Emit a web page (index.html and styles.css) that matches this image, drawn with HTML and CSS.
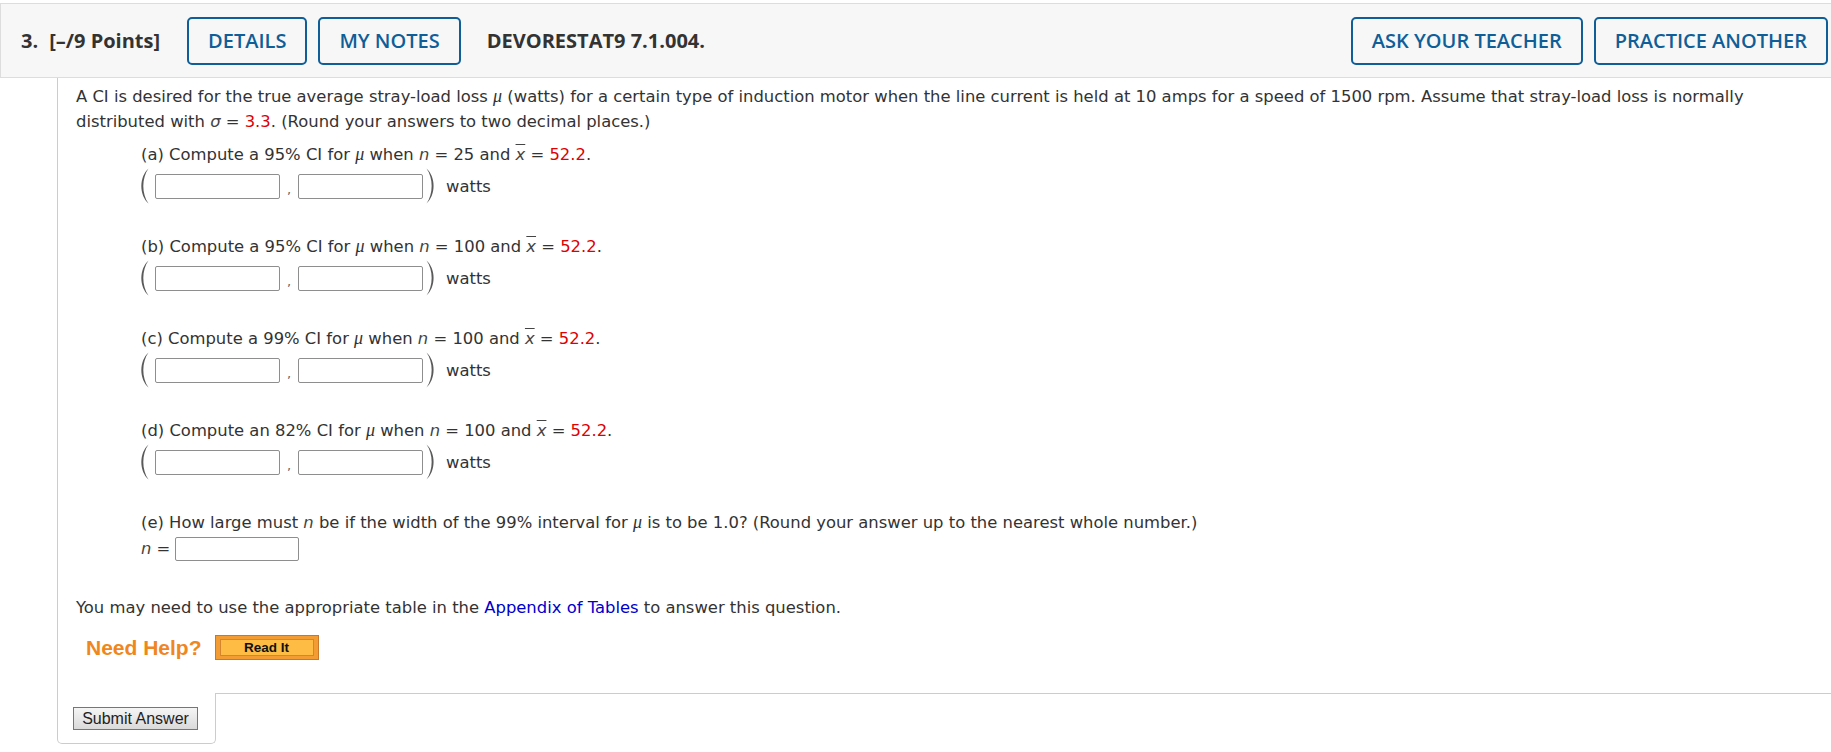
FILE: index.html
```html
<!DOCTYPE html>
<html lang="en">
<head>
<meta charset="utf-8">
<title>DEVORESTAT9 7.1.004</title>
<link rel="stylesheet" href="styles.css">
</head>
<body>
<div class="page">
  <header class="qhead">
    <span class="qnum">3.</span>
    <span class="qpts">[–/9 Points]</span>
    <button class="hbtn first">DETAILS</button>
    <button class="hbtn">MY NOTES</button>
    <span class="qid">DEVORESTAT9 7.1.004.</span>
    <span class="spacer"></span>
    <button class="hbtn">ASK YOUR TEACHER</button>
    <button class="hbtn">PRACTICE ANOTHER</button>
  </header>

  <div class="qbody">
    <div class="content">
      <p class="intro">A CI is desired for the true average stray-load loss <i class="mu">μ</i> (watts) for a certain type of induction motor when the line current is held at 10 amps for a speed of 1500 rpm. Assume that stray-load loss is normally distributed with <i class="var">σ</i> = <span class="red">3.3</span>. (Round your answers to two decimal places.)</p>

      <div class="part">
        <p class="qline">(a) Compute a 95% CI for <i class="mu">μ</i> when <i class="var">n</i> = 25 and <i class="var xbar">x</i> = <span class="red">52.2</span>.</p>
        <div class="ansrow">
          <svg class="paren" viewBox="0 0 12 36" width="12" height="36"><path d="M10.5 0.5 C1 9 1 27 10.5 35.5 C3.6 26 3.6 10 10.5 0.5 Z"/></svg>
          <input class="box" type="text">
          <span class="comma">,</span>
          <input class="box" type="text">
          <svg class="paren right" viewBox="0 0 12 36" width="12" height="36"><path d="M1.5 0.5 C11 9 11 27 1.5 35.5 C8.4 26 8.4 10 1.5 0.5 Z"/></svg>
          <span class="unit">watts</span>
        </div>
      </div>

      <div class="part">
        <p class="qline">(b) Compute a 95% CI for <i class="mu">μ</i> when <i class="var">n</i> = 100 and <i class="var xbar">x</i> = <span class="red">52.2</span>.</p>
        <div class="ansrow">
          <svg class="paren" viewBox="0 0 12 36" width="12" height="36"><path d="M10.5 0.5 C1 9 1 27 10.5 35.5 C3.6 26 3.6 10 10.5 0.5 Z"/></svg>
          <input class="box" type="text">
          <span class="comma">,</span>
          <input class="box" type="text">
          <svg class="paren right" viewBox="0 0 12 36" width="12" height="36"><path d="M1.5 0.5 C11 9 11 27 1.5 35.5 C8.4 26 8.4 10 1.5 0.5 Z"/></svg>
          <span class="unit">watts</span>
        </div>
      </div>

      <div class="part">
        <p class="qline">(c) Compute a 99% CI for <i class="mu">μ</i> when <i class="var">n</i> = 100 and <i class="var xbar">x</i> = <span class="red">52.2</span>.</p>
        <div class="ansrow">
          <svg class="paren" viewBox="0 0 12 36" width="12" height="36"><path d="M10.5 0.5 C1 9 1 27 10.5 35.5 C3.6 26 3.6 10 10.5 0.5 Z"/></svg>
          <input class="box" type="text">
          <span class="comma">,</span>
          <input class="box" type="text">
          <svg class="paren right" viewBox="0 0 12 36" width="12" height="36"><path d="M1.5 0.5 C11 9 11 27 1.5 35.5 C8.4 26 8.4 10 1.5 0.5 Z"/></svg>
          <span class="unit">watts</span>
        </div>
      </div>

      <div class="part">
        <p class="qline">(d) Compute an 82% CI for <i class="mu">μ</i> when <i class="var">n</i> = 100 and <i class="var xbar">x</i> = <span class="red">52.2</span>.</p>
        <div class="ansrow">
          <svg class="paren" viewBox="0 0 12 36" width="12" height="36"><path d="M10.5 0.5 C1 9 1 27 10.5 35.5 C3.6 26 3.6 10 10.5 0.5 Z"/></svg>
          <input class="box" type="text">
          <span class="comma">,</span>
          <input class="box" type="text">
          <svg class="paren right" viewBox="0 0 12 36" width="12" height="36"><path d="M1.5 0.5 C11 9 11 27 1.5 35.5 C8.4 26 8.4 10 1.5 0.5 Z"/></svg>
          <span class="unit">watts</span>
        </div>
      </div>

      <div class="part last">
        <p class="qline">(e) How large must <i class="var">n</i> be if the width of the 99% interval for <i class="mu">μ</i> is to be 1.0? (Round your answer up to the nearest whole number.)</p>
        <div class="nrow">
          <span class="nlabel"><i class="var">n</i> =</span>
          <input class="box small" type="text">
        </div>
      </div>

      <p class="note">You may need to use the appropriate table in the <a class="link" href="#">Appendix of Tables</a> to answer this question.</p>

      <div class="help">
        <span class="needhelp">Need Help?</span>
        <span class="readit"><span class="readit-inner">Read It</span></span>
      </div>
    </div>

    <div class="footer">
      <div class="tab"><button class="submit">Submit Answer</button></div>
      <div class="fill"></div>
    </div>
  </div>
</div>
</body>
</html>
```

FILE: styles.css
```css
html, body {
  margin: 0;
  padding: 0;
  background: #ffffff;
}

.page {
  padding-top: 3px;
  font-family: "DejaVu Sans", Verdana, sans-serif;
  color: #333333;
}

/* ---------- header ---------- */
.qhead {
  display: flex;
  align-items: center;
  box-sizing: border-box;
  height: 75px;
  padding: 0 3px 0 20px;
  background: #f7f7f7;
  border: 1px solid #dddddd;
  border-right: none;
  font-family: "Open Sans", "Liberation Sans", sans-serif;
  font-size: 20px;
  color: #333333;
}

.qnum {
  font-weight: 700;
}

.qpts {
  font-weight: 700;
  margin-left: 11px;
  margin-right: 27px;
}

.qid {
  font-weight: 700;
  margin-left: 26px;
}

.spacer {
  flex: 1;
}

.hbtn {
  box-sizing: border-box;
  height: 48px;
  padding: 0 19px;
  margin: 0 0 0 11px;
  background: transparent;
  border: 2px solid #0f5e97;
  border-radius: 5px;
  color: #0f5e97;
  font-family: "Open Sans", "Liberation Sans", sans-serif;
  font-size: 20px;
  font-weight: 600;
  line-height: 1;
  cursor: pointer;
}

.hbtn.first {
  margin-left: 0;
}

/* ---------- body ---------- */
.qbody {
  margin-left: 57px;
}

.content {
  border-left: 1px solid #cccccc;
  padding: 6px 20px 33px 18px;
  font-size: 16.4px;
  line-height: 25px;
}

.intro {
  margin: 0 0 8px 0;
}

.red {
  color: #e00000;
}

.mu {
  font-family: "Liberation Serif", "Times New Roman", serif;
  font-style: italic;
  font-size: 18px;
  line-height: 1;
}

.var {
  font-style: italic;
  font-weight: 300;
  color: #444444;
  line-height: 1;
}

.xbar {
  text-decoration: overline;
}

.part {
  margin: 0 0 30px 65px;
}

.part.last {
  margin-bottom: 34px;
}

.qline {
  margin: 0;
}

.ansrow {
  display: flex;
  align-items: center;
  height: 36px;
  margin: 1px 0 0 -3px;
}

.paren {
  display: block;
  fill: #5a5a5a;
  margin-right: 5px;
}

.paren.right {
  margin: 0 0 0 2px;
}

.box {
  box-sizing: border-box;
  width: 125px;
  height: 25px;
  margin: 0;
  padding: 2px 4px;
  border: 1px solid #8e8e8e;
  border-radius: 2px;
  background: #ffffff;
  font-family: "DejaVu Sans", sans-serif;
  font-size: 14px;
}

.box.small {
  width: 124px;
  height: 24px;
}

.comma {
  width: 18px;
  text-align: center;
  font-size: 13px;
  color: #666666;
  padding-top: 6px;
  line-height: 13px;
}

.unit {
  margin-left: 9px;
}

.nrow {
  display: flex;
  align-items: center;
  margin-top: 1px;
}

.nlabel {
  margin-right: 5px;
}

.note {
  margin: 0;
}

.link {
  color: #0000cc;
  text-decoration: none;
}

.help {
  display: flex;
  align-items: center;
  margin: 15px 0 0 10px;
}

.needhelp {
  font-family: "Liberation Sans", Arial, sans-serif;
  font-size: 21px;
  font-weight: 700;
  color: #f0871e;
  line-height: 25px;
}

.readit {
  box-sizing: border-box;
  display: block;
  width: 104px;
  height: 25px;
  margin-left: 13px;
  padding: 3px 4px;
  border: 1px solid #c9782a;
  background: #f49c34;
}

.readit-inner {
  box-sizing: border-box;
  display: block;
  height: 17px;
  border: 1px solid #d5852f;
  background: #ffbc45;
  font-family: "Liberation Sans", Arial, sans-serif;
  font-size: 13.5px;
  font-weight: 700;
  line-height: 15px;
  text-align: center;
  color: #111111;
}

/* ---------- footer / submit tab ---------- */
.footer {
  display: flex;
  align-items: flex-start;
}

.tab {
  box-sizing: border-box;
  width: 159px;
  height: 51px;
  padding: 14px 0 0 15px;
  border-left: 1px solid #cccccc;
  border-right: 1px solid #cccccc;
  border-bottom: 1px solid #cccccc;
  border-radius: 0 0 5px 5px;
}

.fill {
  flex: 1;
  border-top: 1px solid #cccccc;
}

.submit {
  box-sizing: border-box;
  width: 125px;
  height: 23px;
  padding: 0;
  border: 1px solid #767676;
  background: linear-gradient(#f5f5f5, #dadada);
  font-family: "Liberation Sans", Arial, sans-serif;
  font-size: 16px;
  color: #222222;
  cursor: pointer;
}
```
